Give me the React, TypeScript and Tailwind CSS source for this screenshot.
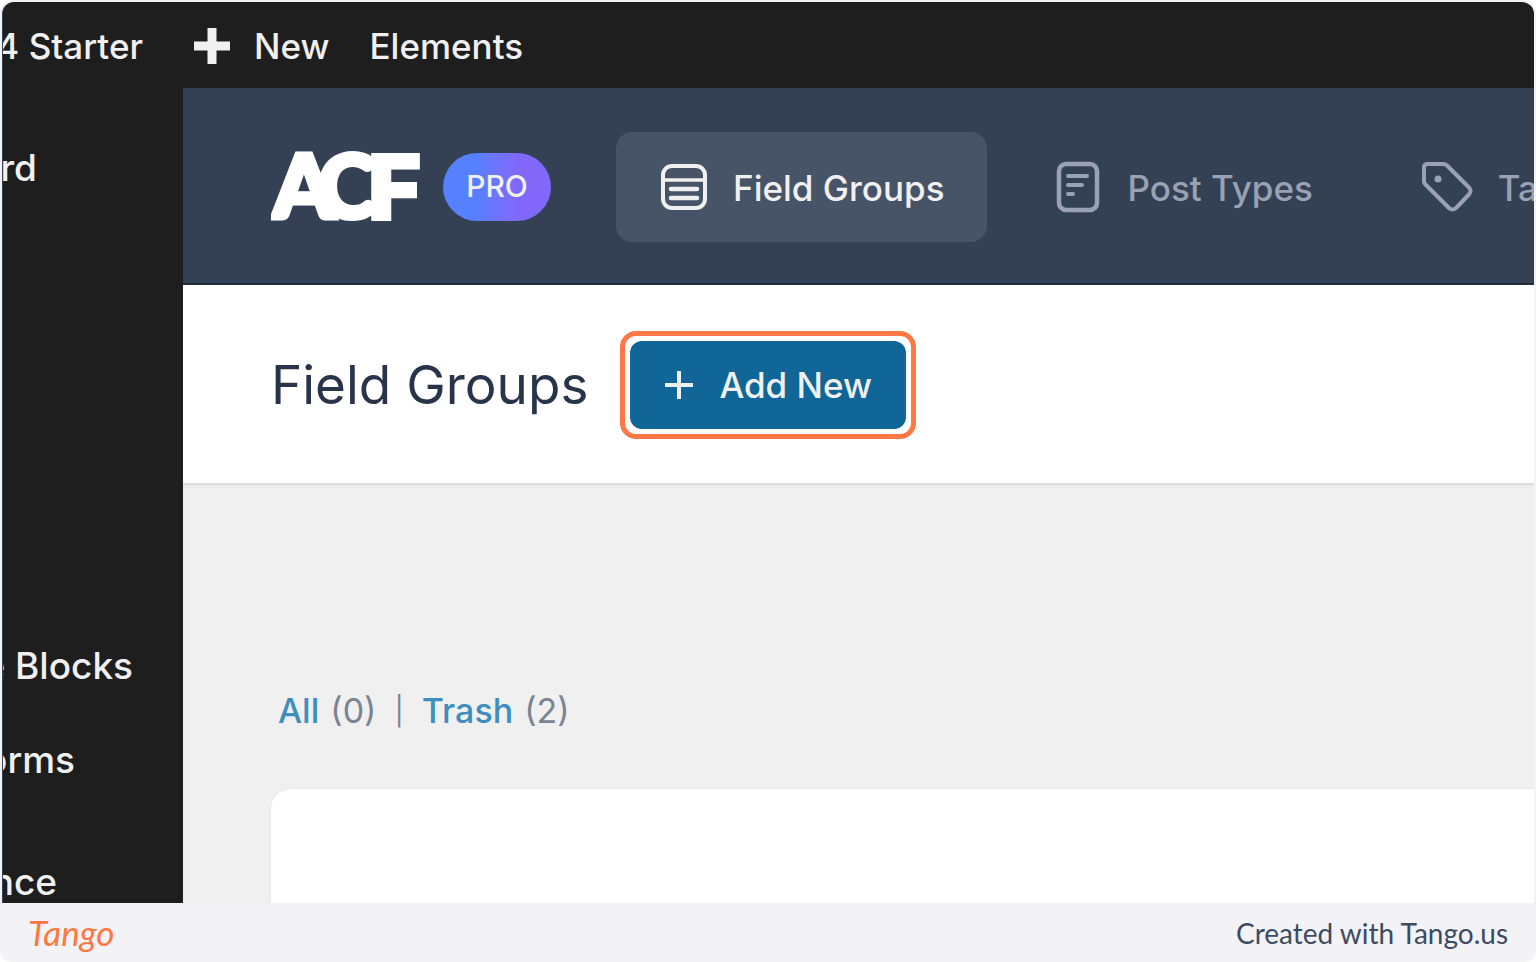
import type { ReactNode } from "react";

const sidebarItems = [
  { label: "rd", row: "w-[34px] h-20 mt-10" },
  { label: "e Blocks", row: "w-[130px] h-20 mt-[418px]" },
  { label: "orms", row: "w-[72px] h-20 mt-[14px]" },
  { label: "nce", row: "w-[54px] h-10 mt-[62px]" },
];

function AcfLogo() {
  return (
    <svg
      role="img"
      aria-label="ACF"
      className="h-[72px] w-[150px] shrink-0 fill-white stroke-white"
      viewBox="0 0 150 72"
      fontFamily="Lato, sans-serif"
      fontWeight={900}
      fontSize={88}
      strokeWidth={5}
    >
      <text x="2" y="67">A</text>
      <text x="47" y="67">C</text>
      <text x="97" y="69" fontFamily="Inter, sans-serif" fontSize={91} strokeWidth={2}>F</text>
    </svg>
  );
}

function FieldGroupsIcon() {
  return (
    <svg className="h-12 w-12 shrink-0" viewBox="0 0 48 48" fill="none" stroke="currentColor" strokeWidth="4" strokeLinecap="round" aria-hidden="true">
      <rect x="3" y="3" width="42" height="42" rx="9" />
      <path d="M3 17h42" strokeWidth="3.5" />
      <path d="M11 26h26M11 35h26" strokeWidth="4.5" />
    </svg>
  );
}

function PostTypesIcon() {
  return (
    <svg className="h-[52px] w-11 shrink-0" viewBox="0 0 44 52" fill="none" stroke="currentColor" strokeWidth="4.5" strokeLinecap="round" aria-hidden="true">
      <rect x="3" y="3" width="38" height="46" rx="7" />
      <path d="M12 15h19M12 24h14M12 33h5" strokeWidth="4" />
    </svg>
  );
}

function TagIcon() {
  return (
    <svg className="h-[52px] w-[52px] shrink-0" viewBox="0 0 52 52" fill="none" stroke="currentColor" strokeWidth="4" strokeLinejoin="round" aria-hidden="true">
      <path d="M6.500 3H22q2.500 0 4 1.500L48 26.500q3 3.500 0 7L35 47q-3.500 3-7 0L4.500 23.500Q3 22 3 20V6.500Q3 3 6.500 3Z" />
      <circle cx="17" cy="18" r="3.500" fill="currentColor" stroke="none" />
    </svg>
  );
}

function NavLink({ icon, label, className }: { icon: ReactNode; label: string; className: string }) {
  return (
    <a href="#" className={`flex h-[110px] shrink-0 items-center rounded-2xl text-[35px] font-medium ${className}`}>
      {icon}
      <span className="pt-[3px]">{label}</span>
    </a>
  );
}

export default function App() {
  return (
    <div className="flex min-h-screen flex-col overflow-hidden rounded-xl bg-[#f2f2f7] font-['Inter',sans-serif]">
      <div className="mx-[2px] mt-[2px] flex flex-1 flex-col overflow-hidden rounded-t-xl border-l border-[#334155] bg-[#1e1e1e] text-[#f0f0f1]">
        <header className="flex h-[86px] shrink-0 items-center pt-[2px] text-[35px] font-medium whitespace-nowrap">
          <a href="#" className="flex w-[140px] shrink-0 justify-end">4 Starter</a>
          <a href="#" className="ml-[51px] flex items-center gap-6">
            <svg className="h-9 w-9" viewBox="0 0 36 36" aria-hidden="true">
              <path d="M18 0v36M0 18h36" stroke="currentColor" strokeWidth="9" />
            </svg>
            New
          </a>
          <a href="#" className="ml-10">Elements</a>
        </header>

        <div className="flex flex-1">
          <nav aria-label="Admin menu" className="w-[180px] shrink-0 overflow-hidden text-[37px] font-medium whitespace-nowrap">
            {sidebarItems.map((item) => (
              <a key={item.label} href="#" className={`flex items-center justify-end ${item.row}`}>
                {item.label}
              </a>
            ))}
          </nav>

          <main className="flex min-w-0 flex-1 flex-col overflow-hidden bg-[#f0f0f0]">
            <div className="flex h-[197px] shrink-0 items-center overflow-hidden border-b-2 border-[#1d2a3c] bg-[#344054] pt-[2px] pl-[88px] whitespace-nowrap">
              <AcfLogo />
              <span className="ml-[22px] flex h-[68px] w-[108px] shrink-0 items-center justify-center rounded-full bg-linear-to-r from-[#5580ff] from-30% to-[#8168fa] to-70% text-[30px] font-medium">
                PRO
              </span>
              <NavLink icon={<FieldGroupsIcon />} label="Field Groups" className="ml-[65px] gap-[25px] bg-[#475467] pr-[42px] pl-11" />
              <NavLink icon={<PostTypesIcon />} label="Post Types" className="ml-[69px] gap-[28px] text-[#98a2b3]" />
              <NavLink icon={<TagIcon />} label="Ta" className="ml-[108px] gap-[25px] text-[#98a2b3]" />
            </div>

            <div className="flex h-[198px] shrink-0 items-center gap-8 bg-white pt-[2px] pl-[88px] shadow-[0_2px_3px_#d5d5da]">
              <h1 className="pt-[2px] text-[53px] whitespace-nowrap text-[#27344a]">Field Groups</h1>
              <div className="rounded-2xl border-[5px] border-[#ff7742] p-[5px]">
                <button type="button" className="flex h-[88px] items-center gap-[25px] rounded-xl bg-[#106696] px-[34px] text-[35px] font-medium whitespace-nowrap">
                  <svg className="h-[30px] w-[30px]" viewBox="0 0 30 30" aria-hidden="true">
                    <path d="M15 1v28M1 15h28" stroke="currentColor" strokeWidth="4" />
                  </svg>
                  Add New
                </button>
              </div>
            </div>

            <div className="flex items-center pt-[203px] pl-[95px] text-[34px] leading-[50px] whitespace-nowrap text-[#7b8493]">
              <a href="#" className="font-medium text-[#3e8fbf]">All</a>
              <span className="ml-[11px]">(0)</span>
              <span className="mx-[18px] text-[28px]">|</span>
              <a href="#" className="font-medium text-[#3e8fbf]">Trash</a>
              <span className="ml-[11px]">(2)</span>
            </div>

            <section className="mt-[53px] ml-[88px] min-h-[112px] flex-1 rounded-tl-[20px] bg-white shadow-[0_0_3px_#dfdfe3]" />
          </main>
        </div>
      </div>

      <footer className="flex h-[59px] shrink-0 items-center justify-between px-7 font-['Lato',sans-serif]">
        <a href="#" className="text-[35px] text-[#ff7742] italic">Tango</a>
        <span className="text-[28px] text-[#3d4b60]">Created with Tango.us</span>
      </footer>
    </div>
  );
}
